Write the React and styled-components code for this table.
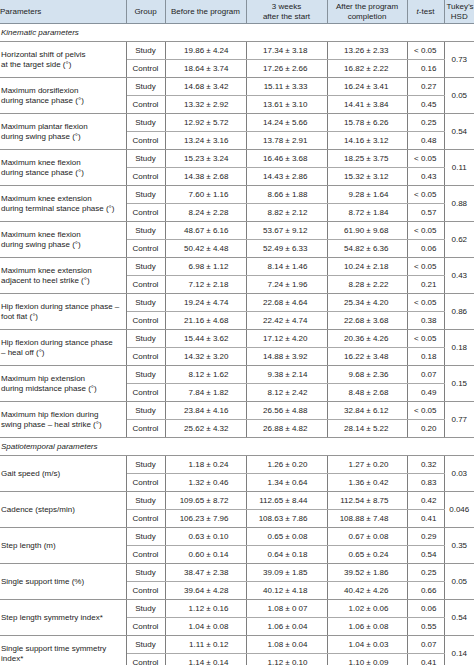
import React from "react";
import styled, { createGlobalStyle } from "styled-components";

const GlobalStyle = createGlobalStyle`
  html, body { margin: 0; padding: 0; background: #ffffff; }
  body { font-family: "Liberation Sans", Arial, sans-serif; color: #232323; }
`;

const kinematic = [
  { name: ["Horizontal shift of pelvis", "at the target side (°)"], study: ["19.86 ± 4.24", "17.34 ± 3.18", "13.26 ± 2.33", "< 0.05"], control: ["18.64 ± 3.74", "17.26 ± 2.66", "16.82 ± 2.22", "0.16"], hsd: "0.73" },
  { name: ["Maximum dorsiflexion", "during stance phase (°)"], study: ["14.68 ± 3.42", "15.11 ± 3.33", "16.24 ± 3.41", "0.27"], control: ["13.32 ± 2.92", "13.61 ± 3.10", "14.41 ± 3.84", "0.45"], hsd: "0.05" },
  { name: ["Maximum plantar flexion", "during swing phase (°)"], study: ["12.92 ± 5.72", "14.24 ± 5.66", "15.78 ± 6.26", "0.25"], control: ["13.24 ± 3.16", "13.78 ± 2.91", "14.16 ± 3.12", "0.48"], hsd: "0.54" },
  { name: ["Maximum knee flexion", "during stance phase (°)"], study: ["15.23 ± 3.24", "16.46 ± 3.68", "18.25 ± 3.75", "< 0.05"], control: ["14.38 ± 2.68", "14.43 ± 2.86", "15.32 ± 3.12", "0.43"], hsd: "0.11" },
  { name: ["Maximum knee extension", "during terminal stance phase (°)"], study: ["7.60 ± 1.16", "8.66 ± 1.88", "9.28 ± 1.64", "< 0.05"], control: ["8.24 ± 2.28", "8.82 ± 2.12", "8.72 ± 1.84", "0.57"], hsd: "0.88" },
  { name: ["Maximum knee flexion", "during swing phase (°)"], study: ["48.67 ± 6.16", "53.67 ± 9.12", "61.90 ± 9.68", "< 0.05"], control: ["50.42 ± 4.48", "52.49 ± 6.33", "54.82 ± 6.36", "0.06"], hsd: "0.62" },
  { name: ["Maximum knee extension", "adjacent to heel strike (°)"], study: ["6.98 ± 1.12", "8.14 ± 1.46", "10.24 ± 2.18", "< 0.05"], control: ["7.12 ± 2.18", "7.24 ± 1.96", "8.28 ± 2.22", "0.21"], hsd: "0.43" },
  { name: ["Hip flexion during stance phase –", "foot flat (°)"], study: ["19.24 ± 4.74", "22.68 ± 4.64", "25.34 ± 4.20", "< 0.05"], control: ["21.16 ± 4.68", "22.42 ± 4.74", "22.68 ± 3.68", "0.38"], hsd: "0.86" },
  { name: ["Hip flexion during stance phase", "– heal off (°)"], study: ["15.44 ± 3.62", "17.12 ± 4.20", "20.36 ± 4.26", "< 0.05"], control: ["14.32 ± 3.20", "14.88 ± 3.92", "16.22 ± 3.48", "0.18"], hsd: "0.18" },
  { name: ["Maximum hip extension", "during midstance phase (°)"], study: ["8.12 ± 1.62", "9.38 ± 2.14", "9.68 ± 2.36", "0.07"], control: ["7.84 ± 1.82", "8.12 ± 2.42", "8.48 ± 2.68", "0.49"], hsd: "0.15" },
  { name: ["Maximum hip flexion during", "swing phase – heal strike (°)"], study: ["23.84 ± 4.16", "26.56 ± 4.88", "32.84 ± 6.12", "< 0.05"], control: ["25.62 ± 4.32", "26.88 ± 4.82", "28.14 ± 5.22", "0.20"], hsd: "0.77" },
];

const spatiotemporal = [
  { name: ["Gait speed (m/s)"], study: ["1.18 ± 0.24", "1.26 ± 0.20", "1.27 ± 0.20", "0.32"], control: ["1.32 ± 0.46", "1.34 ± 0.64", "1.36 ± 0.42", "0.83"], hsd: "0.03" },
  { name: ["Cadence (steps/min)"], study: ["109.65 ± 8.72", "112.65 ± 8.44", "112.54 ± 8.75", "0.42"], control: ["106.23 ± 7.96", "108.63 ± 7.86", "108.88 ± 7.48", "0.41"], hsd: "0.046" },
  { name: ["Step length (m)"], study: ["0.63 ± 0.10", "0.65 ± 0.08", "0.67 ± 0.08", "0.29"], control: ["0.60 ± 0.14", "0.64 ± 0.18", "0.65 ± 0.24", "0.54"], hsd: "0.35" },
  { name: ["Single support time (%)"], study: ["38.47 ± 2.38", "39.09 ± 1.85", "39.52 ± 1.86", "0.25"], control: ["39.64 ± 4.28", "40.12 ± 4.18", "40.42 ± 4.26", "0.66"], hsd: "0.05" },
  { name: ["Step length symmetry index*"], study: ["1.12 ± 0.16", "1.08 ± 0 07", "1.02 ± 0.06", "0.06"], control: ["1.04 ± 0.08", "1.06 ± 0.04", "1.06 ± 0.08", "0.55"], hsd: "0.54" },
  { name: ["Single support time symmetry", "index*"], study: ["1.11 ± 0.12", "1.08 ± 0.04", "1.04 ± 0.03", "0.07"], control: ["1.14 ± 0.14", "1.12 ± 0.10", "1.10 ± 0.09", "0.41"], hsd: "0.14" },
];

const Table = styled.table`
  width: 474px;
  table-layout: fixed;
  border-collapse: collapse;
  font-size: 8px;
  line-height: 10px;
  color: #232323;
`;

const Head = styled.th`
  background: #d4e2ef;
  font-weight: normal;
  height: 23px;
  padding: 0 2px;
  text-align: ${(p) => (p.$left ? "left" : "center")};
  padding-left: ${(p) => (p.$left ? "0" : "2px")};
  border-right: ${(p) => (p.$last ? "none" : "1px solid #86919b")};
  border-bottom: 1px solid #86919b;
  white-space: nowrap;
  overflow: visible;
`;

const SectionCell = styled.td`
  height: 17px;
  padding: 0 0 0 1px;
  font-style: italic;
  text-align: left;
  border-bottom: 1px solid #959595;
`;

const ParamCell = styled.td`
  padding: 0 0 0 1px;
  text-align: left;
  vertical-align: middle;
  border-right: 1px solid #7e7e7e;
  border-bottom: 1px solid #959595;
  white-space: nowrap;
`;

const GroupCell = styled.td`
  height: 17px;
  padding: 0;
  text-align: center;
  border-right: 1px solid #7e7e7e;
  border-bottom: 1px solid ${(p) => (p.$inner ? "#aaaaaa" : "#959595")};
`;

const ValueCell = styled.td`
  height: 17px;
  padding: 0 ${(p) => p.$pad}px 0 0;
  text-align: right;
  white-space: nowrap;
  border-right: 1px solid #7e7e7e;
  border-bottom: 1px solid ${(p) => (p.$inner ? "#aaaaaa" : "#959595")};
`;

const HsdCell = styled.td`
  padding: 0;
  text-align: center;
  vertical-align: middle;
  border-bottom: 1px solid #959595;
`;

const Italic = styled.i`
  font-style: italic;
`;

const pads = [17, 19, 18, 7];

function ParamRows({ item }) {
  return (
    <>
      <tr>
        <ParamCell rowSpan={2}>
          {item.name.map((line, i) => (
            <React.Fragment key={i}>
              {i > 0 && <br />}
              {line}
            </React.Fragment>
          ))}
        </ParamCell>
        <GroupCell $inner>Study</GroupCell>
        {item.study.map((v, i) => (
          <ValueCell key={i} $inner $pad={pads[i]}>{v}</ValueCell>
        ))}
        <HsdCell rowSpan={2}>{item.hsd}</HsdCell>
      </tr>
      <tr>
        <GroupCell>Control</GroupCell>
        {item.control.map((v, i) => (
          <ValueCell key={i} $pad={pads[i]}>{v}</ValueCell>
        ))}
      </tr>
    </>
  );
}

export default function App() {
  return (
    <>
      <GlobalStyle />
      <Table>
        <colgroup>
          <col style={{ width: 126 }} />
          <col style={{ width: 39 }} />
          <col style={{ width: 81 }} />
          <col style={{ width: 81 }} />
          <col style={{ width: 80 }} />
          <col style={{ width: 37 }} />
          <col style={{ width: 30 }} />
        </colgroup>
        <thead>
          <tr>
            <Head $left>Parameters</Head>
            <Head>Group</Head>
            <Head>Before the program</Head>
            <Head>3 weeks<br />after the start</Head>
            <Head>After the program<br />completion</Head>
            <Head><Italic>t</Italic>-test</Head>
            <Head $last>Tukey’s<br />HSD</Head>
          </tr>
        </thead>
        <tbody>
          <tr>
            <SectionCell colSpan={7}>Kinematic parameters</SectionCell>
          </tr>
          {kinematic.map((item, i) => (
            <ParamRows key={i} item={item} />
          ))}
          <tr>
            <SectionCell colSpan={7}>Spatiotemporal parameters</SectionCell>
          </tr>
          {spatiotemporal.map((item, i) => (
            <ParamRows key={i} item={item} />
          ))}
        </tbody>
      </Table>
    </>
  );
}
